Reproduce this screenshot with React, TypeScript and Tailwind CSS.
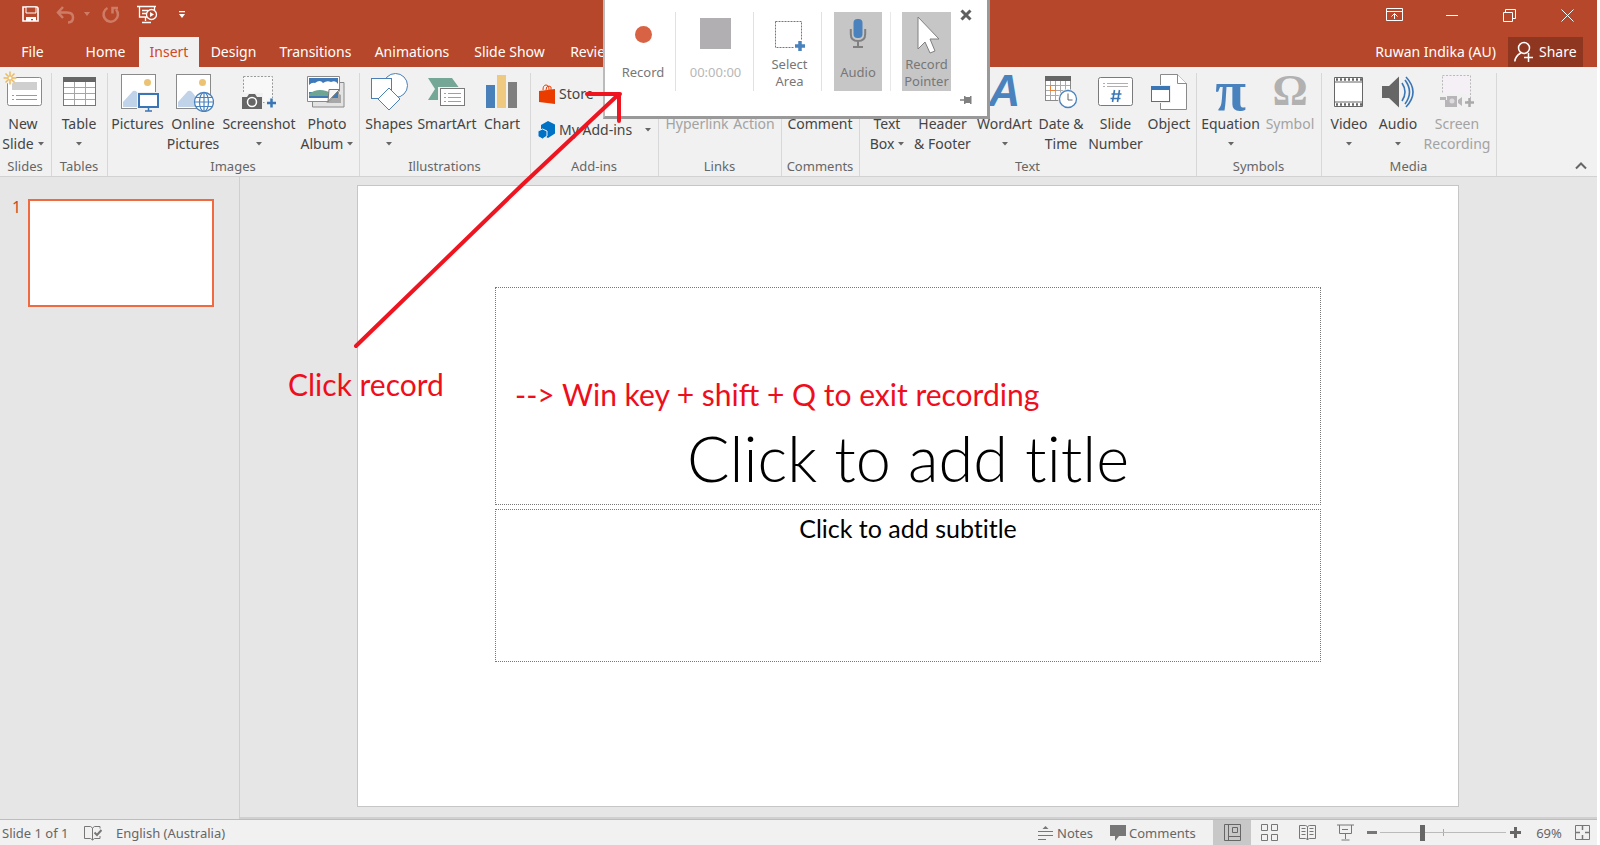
import type { ReactNode } from "react";
import clsx from "clsx";

const Caret = () => (
  <svg width="6" height="4" viewBox="0 0 6 4" className="inline-block shrink-0">
    <path d="M0 0h6L3 3.5z" fill="#666" />
  </svg>
);

const Icon = ({ children }: { children?: ReactNode }) => (
  <svg width="42" height="42" viewBox="0 0 42 42" fill="none" className="shrink-0">
    {children}
  </svg>
);

/* ---------- ribbon icons ---------- */

const NewSlideIcon = () => (
  <Icon>
    <rect x="5.5" y="7.5" width="34" height="28" rx="2" fill="#fff" stroke="#8a8a8a" />
    <rect x="10" y="12" width="25" height="8" fill="#cfcfcf" />
    <path d="M10 25.5h2M14 25.5h21M10 29.5h2M14 29.5h21" stroke="#9a9a9a" />
    <circle cx="8" cy="8" r="6" fill="#f1f1f1" />
    <path d="M8 1.500v13M1.500 8h13M3.500 3.500l9 9M12.500 3.500l-9 9" stroke="#ecbb62" strokeWidth="1.500" />
    <circle cx="8" cy="8" r="2" fill="#fff" stroke="#ecbb62" />
  </Icon>
);

const TableIcon = () => (
  <Icon>
    <rect x="5.500" y="7.500" width="32" height="28" fill="#fff" stroke="#777" />
    <rect x="5" y="7" width="33" height="5" fill="#666" />
    <path d="M16.500 12v23M27.500 12v23M6 17.500h31M6 23.500h31M6 29.500h31" stroke="#a5a5a5" />
  </Icon>
);

const PictureBase = () => (
  <>
    <rect x="4.500" y="4.500" width="34" height="34" fill="#fff" stroke="#8a8a8a" />
    <circle cx="30.500" cy="12.500" r="3.500" fill="#ecc375" />
    <path d="M6 37V32L16 21q2-1 4 1l4 5v10z" fill="#c0d3e8" />
  </>
);

const PicturesIcon = () => (
  <Icon>
    <PictureBase />
    <rect x="20" y="22" width="22" height="20" fill="#f1f1f1" />
    <rect x="22" y="24" width="19" height="13" fill="#fff" stroke="#3a76b5" strokeWidth="2" />
    <path d="M31.500 37v4M28 41h7" stroke="#3a76b5" strokeWidth="1.500" />
  </Icon>
);

const OnlinePicturesIcon = () => (
  <Icon>
    <PictureBase />
    <circle cx="32" cy="32" r="9.500" fill="#fff" stroke="#4a82bd" strokeWidth="1.300" />
    <ellipse cx="32" cy="32" rx="4.500" ry="9.500" stroke="#4a82bd" strokeWidth="1.200" />
    <path d="M32 22.500v19M22.500 32h19M24 27.500h16M24 36.500h16" stroke="#4a82bd" strokeWidth="1.200" />
  </Icon>
);

const ScreenshotIcon = () => (
  <Icon>
    <rect x="5.500" y="6.500" width="29" height="26" fill="#f8f8f8" stroke="#999" strokeDasharray="2 1.500" />
    <rect x="3" y="23" width="22" height="17" fill="#f1f1f1" />
    <path d="M4 27h5l2-3h6l2 3h5v12H4z" fill="#666" />
    <circle cx="14" cy="32" r="4.500" fill="#666" stroke="#fff" strokeWidth="1.500" />
    <path d="M28 33h10M33 28v10" stroke="#f1f1f1" strokeWidth="5" />
    <path d="M29 33h9M33.500 28.500v9" stroke="#3a76b5" strokeWidth="2.500" />
  </Icon>
);

const PhotoAlbumIcon = () => (
  <Icon>
    <path d="M6.500 37v-7h26V12.500h5.500V37z" fill="#e3e3e3" stroke="#8a8a8a" />
    <path d="M20 33h15v-8l-4-2z" fill="#a8a8a8" />
    <path d="M1.500 6.500h32V21L23 31.500H1.500z" fill="#fff" stroke="#8a8a8a" />
    <rect x="3" y="8" width="29" height="20" fill="#3f79b7" />
    <path d="M3 15q3-3 6-2 5-4 8 0 4-3 8-1 5-2 7 2v8H3z" fill="#fff" />
    <path d="M3 24q10-8 24 0v2H3z" fill="#6da592" />
    <path d="M22 31.500l1-12h10.500z" fill="#f5f5f5" stroke="#777" />
  </Icon>
);

const ShapesIcon = () => (
  <Icon>
    <circle cx="27.500" cy="15.500" r="12" fill="#fff" stroke="#4a7fb8" />
    <rect x="3.500" y="8.500" width="20" height="20" fill="#fff" stroke="#4a7fb8" />
    <path d="M21 18l11 11-11 11-11-11z" fill="#fff" stroke="#4a7fb8" />
  </Icon>
);

const SmartArtIcon = () => (
  <Icon>
    <path d="M2 8h24l8 11-8 11H2l7-11z" fill="#74a796" />
    <rect x="12" y="17" width="29" height="21" fill="#f1f1f1" />
    <rect x="14.500" y="18.500" width="24" height="17" fill="#fff" stroke="#7a7a7a" />
    <path d="M18 23.500h2M22 23.500h13M18 27.500h2M22 27.500h13M18 31.500h2M22 31.500h13" stroke="#a0a0a0" />
  </Icon>
);

const ChartIcon = () => (
  <Icon>
    <rect x="5" y="15" width="9" height="23" fill="#4a80b9" />
    <rect x="16" y="5" width="9" height="33" fill="#efc97f" />
    <rect x="27" y="12" width="9" height="26" fill="#7f7f7f" />
  </Icon>
);

const GlyphIcon = ({ glyph, className }: { glyph: string; className: string }) => (
  <span className={clsx("flex h-[42px] items-center justify-center leading-none font-bold", className)}>{glyph}</span>
);

const DateTimeIcon = () => (
  <Icon>
    <rect x="5.500" y="7.500" width="25" height="23" fill="#fff" stroke="#8a8a8a" />
    <path d="M10.500 11v19M15.500 11v19M20.500 11v19M25.500 11v19M6 15.500h24M6 20.500h24M6 25.500h24" stroke="#aaa" />
    <rect x="5" y="6" width="26" height="5" fill="#666" />
    <rect x="10.500" y="15.500" width="5" height="5" fill="#fff" stroke="#e8833a" />
    <circle cx="28" cy="29" r="10" fill="#f1f1f1" />
    <circle cx="28" cy="29" r="8.500" fill="#fff" stroke="#4a82bd" strokeWidth="1.300" />
    <path d="M28 23.500V30h4.500" stroke="#666" />
  </Icon>
);

const SlideNumberIcon = () => (
  <Icon>
    <rect x="3.500" y="7.500" width="34" height="28" rx="2" fill="#fff" stroke="#7a7a7a" />
    <path d="M8 13.500h2M12 13.500h21M8 16.500h2M12 16.500h21" stroke="#b0b0b0" />
    <path d="M19.500 20l-2 12M24.500 20l-2 12M16.500 24h10M15.500 28.500h10" stroke="#3a76b5" strokeWidth="1.600" />
  </Icon>
);

const ObjectIcon = () => (
  <Icon>
    <path d="M12.500 4.500h17l9 9v26h-26z" fill="#fff" stroke="#8a8a8a" />
    <path d="M29.500 4.500v9h9" fill="#fff" stroke="#8a8a8a" />
    <rect x="2" y="15" width="21" height="18" fill="#f1f1f1" />
    <rect x="3.500" y="16.500" width="18" height="15" fill="#fff" stroke="#3a76b5" />
    <rect x="3" y="16" width="19" height="4" fill="#3a76b5" />
  </Icon>
);

const VideoIcon = () => (
  <Icon>
    <path d="M6.500 7.500h28v29h-28z" fill="#fff" stroke="#666" />
    <path d="M8 9.500h26M8 34.500h26" stroke="#666" strokeWidth="2.500" strokeDasharray="2 2" />
    <path d="M7 12h27M7 32h27" stroke="#666" />
  </Icon>
);

const AudioIcon = () => (
  <Icon>
    <path d="M5 16h7L22 6.500v31L12 28H5z" fill="#666" />
    <path d="M25 13q6 9 0 18M28 10q9 12 0 24M29 7q14 15 0 30" stroke="#3a76b5" strokeWidth="1.600" />
  </Icon>
);

const ScreenRecordingIcon = () => (
  <Icon>
    <rect x="6.500" y="5.500" width="28" height="26" fill="#f5f0f5" stroke="#bbb" strokeDasharray="2 1.500" />
    <rect x="3" y="24" width="28" height="14" fill="#f1f1f1" />
    <path d="M4 27h6v3H4zM11 26h10v11H9v-7h2zM22 30l4-3v9l-4-3z" fill="#b8b5b8" />
    <circle cx="16" cy="31" r="2.500" fill="#dedbde" />
    <path d="M29 32.500h9M33.500 28v9" stroke="#aaa" strokeWidth="2.500" />
  </Icon>
);

const StoreIcon = () => (
  <svg width="18" height="20" viewBox="0 0 18 20" fill="none">
    <path d="M5 6q0-5 3-5t3 5M8 6q0-4 3-4t2 4" stroke="#eb3c00" />
    <path d="M1 7l16-2v15L1 18z" fill="#eb3c00" />
  </svg>
);

const AddInsIcon = () => (
  <svg width="18" height="18" viewBox="0 0 18 18">
    <path d="M10 0l7 3.500v9L10 17l-7-4V4z" fill="#0072c6" />
    <path d="M4.500 8l4.500 2v5l-4.500 3L0 15.500V10z" fill="#0072c6" stroke="#f1f1f1" />
  </svg>
);

/* ---------- ribbon building blocks ---------- */

interface ToolProps {
  icon?: ReactNode;
  lines: string[];
  width: string;
  menu?: boolean;
  disabled?: boolean;
}

const Tool = ({ icon, lines, width, menu, disabled }: ToolProps) => (
  <button
    disabled={disabled}
    className={clsx(
      "flex shrink-0 flex-col items-center whitespace-nowrap text-sm leading-5",
      width,
      disabled ? "text-[#a3a3a3]" : "text-[#444]"
    )}
  >
    <span className="flex h-11 items-start justify-center">{icon}</span>
    <span>{lines[0]}</span>
    <span className="flex h-5 items-center gap-1">
      {lines[1]}
      {menu && <Caret />}
    </span>
  </button>
);

const Group = ({ label, width, children }: { label: string; width: string; children: ReactNode }) => (
  <section
    aria-label={label}
    className={clsx(
      "relative flex shrink-0 flex-col after:absolute after:top-[3px] after:right-0 after:h-[103px] after:w-px after:bg-[#d8d8d8]",
      width
    )}
  >
    <div className="flex h-[87px]">{children}</div>
    <div className="pr-0.5 text-center text-[13px] leading-5 text-[#666]">{label}</div>
  </section>
);

const Ribbon = () => (
  <div className="flex h-[110px] shrink-0 border-b border-[#d2d2d2] bg-[#f1f1f1] pt-[3px]">
    <Group label="Slides" width="w-[52px]">
      <Tool icon={<NewSlideIcon />} lines={["New", "Slide"]} width="w-[46px]" menu />
    </Group>
    <Group label="Tables" width="w-14">
      <Tool icon={<TableIcon />} lines={["Table"]} width="w-[54px]" menu />
    </Group>
    <Group label="Images" width="w-[252px]">
      <Tool icon={<PicturesIcon />} lines={["Pictures"]} width="w-[59px]" />
      <Tool icon={<OnlinePicturesIcon />} lines={["Online", "Pictures"]} width="w-[52px]" />
      <Tool icon={<ScreenshotIcon />} lines={["Screenshot"]} width="w-20" menu />
      <Tool icon={<PhotoAlbumIcon />} lines={["Photo", "Album"]} width="w-14" menu />
    </Group>
    <Group label="Illustrations" width="w-[171px]">
      <Tool icon={<ShapesIcon />} lines={["Shapes"]} width="w-[58px]" menu />
      <Tool icon={<SmartArtIcon />} lines={["SmartArt"]} width="w-[58px]" />
      <Tool icon={<ChartIcon />} lines={["Chart"]} width="w-[52px]" />
    </Group>
    <Group label="Add-ins" width="w-[128px]">
      <div className="flex flex-col gap-4 pt-[14px] pl-[7px] text-sm leading-5 text-[#444]">
        <button className="flex items-center gap-[3px]">
          <StoreIcon />
          Store
        </button>
        <button className="flex items-center gap-[3px] whitespace-nowrap">
          <AddInsIcon />
          My Add-ins
          <span className="flex pl-2.5">
            <Caret />
          </span>
        </button>
      </div>
    </Group>
    <Group label="Links" width="w-[123px]">
      <div className="flex pl-2">
        <Tool lines={["Hyperlink"]} width="w-[60px]" disabled />
        <Tool lines={["Action"]} width="w-[54px]" disabled />
      </div>
    </Group>
    <Group label="Comments" width="w-[78px]">
      <Tool lines={["Comment"]} width="w-[76px]" />
    </Group>
    <Group label="Text" width="w-[337px]">
      <Tool lines={["Text", "Box"]} width="w-[54px]" menu />
      <Tool lines={["Header", "& Footer"]} width="w-[57px]" />
      <Tool
        icon={<GlyphIcon glyph="A" className="font-['Liberation_Sans'] text-[44px] text-[#4a82bd] italic" />}
        lines={["WordArt"]}
        width="w-[67px]"
        menu
      />
      <Tool icon={<DateTimeIcon />} lines={["Date &", "Time"]} width="w-[46px]" />
      <Tool icon={<SlideNumberIcon />} lines={["Slide", "Number"]} width="w-[63px]" />
      <Tool icon={<ObjectIcon />} lines={["Object"]} width="w-[44px]" />
    </Group>
    <Group label="Symbols" width="w-[125px]">
      <Tool
        icon={<GlyphIcon glyph="π" className="font-['Liberation_Serif'] text-[56px] text-[#4a82bd]" />}
        lines={["Equation"]}
        width="w-[67px]"
        menu
      />
      <Tool
        icon={<GlyphIcon glyph="Ω" className="font-['Liberation_Serif'] text-[44px] text-[#b1b1b1]" />}
        lines={["Symbol"]}
        width="w-[52px]"
        disabled
      />
    </Group>
    <Group label="Media" width="w-[175px]">
      <Tool icon={<VideoIcon />} lines={["Video"]} width="w-[54px]" menu />
      <Tool icon={<AudioIcon />} lines={["Audio"]} width="w-[44px]" menu />
      <Tool icon={<ScreenRecordingIcon />} lines={["Screen", "Recording"]} width="w-[74px]" disabled />
    </Group>
    <button aria-label="Collapse ribbon" className="mt-auto mr-2.5 mb-1 ml-auto">
      <svg width="12" height="12" viewBox="0 0 12 12" fill="none">
        <path d="M1 8.500l5-5 5 5" stroke="#666" strokeWidth="2" />
      </svg>
    </button>
  </div>
);

/* ---------- title bar and tabs ---------- */

const TitleBar = () => (
  <div className="flex h-[37px] items-start pt-1 text-white">
    <button aria-label="Save" className="ml-[21px]">
      <svg width="20" height="20" viewBox="0 0 20 20" fill="none">
        <path d="M2 3h14l1 1v13H2z" stroke="#fff" strokeWidth="1.600" />
        <path d="M5 3h10v6H5z" fill="#b7472a" stroke="#fff" />
        <path d="M5 17v-4h10v4h-3v-2h-2v2z" fill="#fff" />
      </svg>
    </button>
    <button aria-label="Undo" className="ml-[15px]" disabled>
      <svg width="20" height="22" viewBox="0 0 20 22" fill="none">
        <path d="M7 3L2 8.500 7 14M2 8.500h9q6 0 6 5t-5 5" stroke="#cf7c67" strokeWidth="2.500" />
      </svg>
    </button>
    <button aria-label="Undo list" className="mt-2 ml-2" disabled>
      <svg width="6" height="5" viewBox="0 0 6 5">
        <path d="M0 0h6L3 4z" fill="#cf7c67" />
      </svg>
    </button>
    <button aria-label="Repeat" className="ml-[11px]" disabled>
      <svg width="20" height="22" viewBox="0 0 20 22" fill="none">
        <path d="M6.500 4A7.200 7.200 0 1 0 15 5.500M11.500 9.500V4H17" stroke="#cf7c67" strokeWidth="2.500" />
      </svg>
    </button>
    <button aria-label="Start from beginning" className="ml-[15px]">
      <svg width="22" height="20" viewBox="0 0 22 20" fill="none" stroke="#fff">
        <path d="M1 2.500h19M3.500 3v10h8M18.500 3v3M6 6.500h6M6 9.500h4M9.500 13v4M6 18.500h9" strokeWidth="1.300" />
        <circle cx="15.500" cy="10.500" r="5" fill="#b7472a" strokeWidth="1.300" />
        <path d="M14 8l4 2.500L14 13z" fill="#fff" stroke="none" />
      </svg>
    </button>
    <button aria-label="Customize toolbar" className="mt-[7px] ml-5">
      <svg width="8" height="8" viewBox="0 0 8 8">
        <path d="M1 0h6v1.300H1zM1 3h6L4 7z" fill="#fff" />
      </svg>
    </button>
    <div className="mr-px ml-auto flex">
      <button aria-label="Ribbon display options" className="flex h-[22px] w-[57px] items-center justify-center">
        <svg width="17" height="14" viewBox="0 0 17 14" fill="none" stroke="#fff">
          <path d="M.5.500h16v12H.500zM.5 3.500h16M8.500 11V5.500M5.500 8.500l3-3 3 3" />
        </svg>
      </button>
      <button aria-label="Minimize" className="flex h-[22px] w-[58px] items-center justify-center">
        <span className="h-px w-3 bg-white" />
      </button>
      <button aria-label="Restore" className="flex h-[22px] w-[57px] items-center justify-center">
        <svg width="13" height="13" viewBox="0 0 13 13" fill="none" stroke="#fff">
          <path d="M.5 3.500h9v9h-9zM2.500 3V.500h10v9H10" />
        </svg>
      </button>
      <button aria-label="Close" className="flex h-[22px] w-[58px] items-center justify-center">
        <svg width="13" height="13" viewBox="0 0 13 13" fill="none" stroke="#fff">
          <path d="M.5.500l12 12M12.500.500l-12 12" />
        </svg>
      </button>
    </div>
  </div>
);

const tabs = [
  { name: "File", width: "w-[65px]" },
  { name: "Home", width: "w-[67px] ml-[7px]" },
  { name: "Insert", width: "w-[60px]" },
  { name: "Design", width: "w-[69px]" },
  { name: "Transitions", width: "w-[95px]" },
  { name: "Animations", width: "w-[98px]" },
  { name: "Slide Show", width: "w-[97px]" },
  { name: "Review", width: "w-[70px]" },
];

const TabRow = () => (
  <div className="flex h-[30px] text-sm leading-5 text-white">
    {tabs.map((tab) => (
      <button
        key={tab.name}
        className={clsx(
          "flex shrink-0 items-center justify-center whitespace-nowrap",
          tab.width,
          tab.name === "Insert" && "bg-[#f1f1f1] text-[#d24726]"
        )}
      >
        {tab.name}
      </button>
    ))}
    <button className="ml-auto px-3">Ruwan Indika (AU)</button>
    <button className="mr-[14px] flex w-[75px] items-center gap-1.5 bg-[#8f3621] pl-1.5">
      <svg width="19" height="22" viewBox="0 0 19 22" fill="none" stroke="#fff" strokeWidth="1.500">
        <circle cx="10" cy="7" r="5.500" />
        <path d="M.8 20.500q.5-5.500 6-8.500M14.500 12v9M10 16.500h9" />
      </svg>
      Share
    </button>
  </div>
);

/* ---------- screen recorder ---------- */

const recorderText = "text-[13px] leading-[17px]";

const RecorderDock = () => (
  <div className="absolute top-0 left-[603px] flex h-[119px] w-[387px] border-r-[3px] border-b-[3px] border-l-2 border-[#999] border-l-[#bbb] bg-white pt-3 text-[#777]">
    <button className={clsx("flex h-[79px] w-[71px] flex-col items-center border-r border-[#e1e1e1] pl-1.5", recorderText)}>
      <span className="mt-3.5 mb-[21px] h-[17px] w-[17px] rounded-full bg-[#d86344]" />
      Record
    </button>
    <button
      disabled
      className={clsx("flex h-[79px] w-[78px] flex-col items-center border-r border-[#e1e1e1] pl-0.5 text-[#b8b8b8]", recorderText)}
    >
      <span className="mt-1.5 mb-[15px] h-[31px] w-[31px] bg-[#b1afb1]" />
      00:00:00
    </button>
    <button className={clsx("flex h-[79px] w-[68px] flex-col items-center border-r border-[#e1e1e1] pl-1", recorderText)}>
      <svg width="32" height="34" viewBox="0 0 32 34" fill="none" className="mt-2 mb-0.5">
        <rect x="1.500" y="1.500" width="26" height="26" stroke="#777" strokeDasharray="2 1" />
        <path d="M20 26h12M26 20v12" stroke="#fff" strokeWidth="6" />
        <path d="M21 26h10M26 21v10" stroke="#4a82bd" strokeWidth="3.500" />
      </svg>
      Select
      <br />
      Area
    </button>
    <button className={clsx("ml-3 flex h-[79px] w-12 flex-col items-center bg-[#c6c6c6]", recorderText)}>
      <svg width="18" height="32" viewBox="0 0 18 32" fill="none" className="mt-1.5 mb-[14px]">
        <rect x="4.500" y="1" width="9" height="19" rx="4" fill="#4a82bd" />
        <path d="M1.800 11v5q0 7 7.200 7t7.200-7v-5M9 23v6M4 29h10" stroke="#808080" strokeWidth="2" />
      </svg>
      Audio
    </button>
    <div className="ml-2 h-[79px] w-px bg-[#e8e8e8]" />
    <button className={clsx("ml-[11px] flex h-[79px] w-[49px] flex-col items-center bg-[#c6c6c6]", recorderText)}>
      <svg width="24" height="38" viewBox="0 0 24 38" className="mt-1 mb-0.5 ml-1">
        <path d="M1 1v32l7-7 5 11 5-2-5-12h9z" fill="#fff" stroke="#808080" />
      </svg>
      Record
      <br />
      Pointer
    </button>
    <div className="flex h-[93px] flex-1 flex-col items-center justify-between pr-[6px]">
      <button aria-label="Close recorder" className="-mt-1">
        <svg width="12" height="14" viewBox="0 0 12 14">
          <path d="M1.500 2.500l9 9M10.500 2.500l-9 9" stroke="#606060" strokeWidth="3" />
        </svg>
      </button>
      <button aria-label="Pin recorder">
        <svg width="12" height="10" viewBox="0 0 12 10" fill="#808080">
          <path d="M0 4.300h4V1h1.500v1H10V1h1.500v8H10V8H5.500v1H4V5.700H0z" />
        </svg>
      </button>
    </div>
  </div>
);

/* ---------- work area ---------- */

const Workspace = () => (
  <main className="flex flex-1 bg-[#e6e6e6]">
    <aside className="flex w-[240px] shrink-0 items-start border-r border-[#cfcfcf] pt-[22px] pl-3">
      <span className="w-4 text-base leading-4 text-[#d24726]">1</span>
      <button aria-label="Slide 1" className="h-[108px] w-[186px] border-2 border-[#f0693f] bg-white" />
    </aside>
    <div className="flex flex-1 border-b-2 border-[#d0d0d0] pt-2 pr-[138px] pb-2.5 pl-[117px]">
      <div className="flex flex-1 flex-col gap-1 border border-[#c6c6c6] bg-white px-[12.4%] pt-[101px] font-[Lato] text-black [font-variant-ligatures:none]">
        <div className="flex h-[218px] items-end justify-center border border-dotted border-[#777] pb-2">
          <h1 className="text-[63px] leading-[76px] font-light whitespace-nowrap">Click to add title</h1>
        </div>
        <div className="h-[153px] border border-dotted border-[#777] pt-0.5">
          <p className="text-center text-[25px] leading-8">Click to add subtitle</p>
        </div>
      </div>
    </div>
  </main>
);

const Annotations = () => (
  <div className="pointer-events-none absolute inset-0 font-[Lato] text-[#ee0e1c]">
    <svg width="640" height="360" viewBox="0 0 640 360" fill="none" className="absolute top-0 left-0">
      <path
        d="M356 346L522 185 619 94M587 94H620M619 95V121"
        stroke="#ee1520"
        strokeWidth="4"
        strokeLinecap="round"
        strokeLinejoin="round"
      />
    </svg>
    <p className="absolute top-[364px] left-[288px] text-[30px] leading-10 whitespace-nowrap">Click record</p>
    <p className="absolute top-[374px] left-[515px] text-[30px] leading-10 whitespace-nowrap">
      {"--> Win key + shift + Q to exit recording"}
    </p>
  </div>
);

/* ---------- status bar ---------- */

const StatusBar = () => (
  <footer className="flex h-[26px] shrink-0 items-center border-t border-[#bdbdbd] bg-[#f1f1f1] pl-0.5 text-[13px] leading-5 text-[#666]">
    <span className="w-[82px] whitespace-nowrap">Slide 1 of 1</span>
    <button aria-label="Spelling" className="w-[32px]">
      <svg width="18" height="16" viewBox="0 0 18 16" fill="none" stroke="#777">
        <path d="M.5 1.500h6l2 1.500v12l-2-1.500h-6zM8.500 3l2-1.500h5.500v2M16 11v2.500h-5.500L8.500 15" />
        <path d="M10.500 7.500l2.500 2.500 4.500-5" strokeWidth="2" />
      </svg>
    </button>
    <button className="whitespace-nowrap">English (Australia)</button>
    <div className="ml-auto flex h-full items-center">
      <button className="flex w-[72px] items-center gap-1">
        <svg width="15" height="15" viewBox="0 0 15 15" fill="none" stroke="#777">
          <path d="M4.500 4L7.500 1l3 3z" fill="#777" stroke="none" />
          <path d="M0 6.500h15M0 10.500h15M0 14.500h8" />
        </svg>
        Notes
      </button>
      <button className="flex w-[103px] items-center gap-[3px]">
        <svg width="16" height="17" viewBox="0 0 16 17">
          <path d="M0 1h16v11H9l-4 5v-5H0z" fill="#777" />
        </svg>
        Comments
      </button>
      <button aria-label="Normal view" className="flex h-full w-[38px] items-center justify-center bg-[#c8c8c8]">
        <svg width="17" height="17" viewBox="0 0 17 17" fill="none" stroke="#666">
          <path d="M.5.500h16v16H.500zM4.500.500v16M4.500 12.500h12M8.500 3.500h5v5h-5z" />
        </svg>
      </button>
      <button aria-label="Slide sorter" className="flex w-[37px] justify-center">
        <svg width="17" height="17" viewBox="0 0 17 17" fill="none" stroke="#777">
          <path d="M.5.500h6v6h-6zM10.500.500h6v6h-6zM.5 10.500h6v6h-6zM10.500 10.500h6v6h-6z" />
        </svg>
      </button>
      <button aria-label="Reading view" className="flex w-[38px] justify-center">
        <svg width="17" height="17" viewBox="0 0 17 17" fill="none" stroke="#777">
          <path d="M.5 1.500h6l2 1 2-1h6v13h-6l-2 1-2-1h-6zM8.500 3v13M2.500 4.500h4M2.500 7.500h4M2.500 10.500h4M10.500 4.500h4M10.500 7.500h4M10.500 10.500h4" />
        </svg>
      </button>
      <button aria-label="Slide show" className="flex w-[38px] justify-center">
        <svg width="17" height="17" viewBox="0 0 17 17" fill="none" stroke="#777">
          <path d="M0 1h17M2.500 1v8.500h12V1M5 5.500h6M8.500 10v5M4.500 16h8" />
        </svg>
      </button>
      <button aria-label="Zoom out" className="flex w-4 justify-center">
        <span className="h-[3px] w-2.5 bg-[#777]" />
      </button>
      <div className="relative flex w-[126px] items-center">
        <span className="absolute left-[63px] h-[7px] w-px bg-[#aaa]" />
        <input
          type="range"
          aria-label="Zoom"
          defaultValue={33}
          className="relative h-4 w-full appearance-none bg-[linear-gradient(#bbb,#bbb)] bg-[length:100%_1px] bg-center bg-no-repeat [&::-webkit-slider-thumb]:h-4 [&::-webkit-slider-thumb]:w-[5px] [&::-webkit-slider-thumb]:appearance-none [&::-webkit-slider-thumb]:bg-[#666]"
        />
      </div>
      <button aria-label="Zoom in" className="flex w-[19px] justify-center">
        <svg width="11" height="11" viewBox="0 0 11 11">
          <path d="M0 5.500h11M5.500 0v11" stroke="#666" strokeWidth="3" />
        </svg>
      </button>
      <button className="w-12">69%</button>
      <button aria-label="Fit slide to window" className="mr-1.5 ml-0.5">
        <svg width="16" height="16" viewBox="0 0 16 16" fill="none" stroke="#777">
          <path d="M.5.500h14v14H.500z" />
          <path d="M7.500 0v5M7.500 10v5M0 7.500h5M10 7.500h5" strokeWidth="1.500" />
        </svg>
      </button>
    </div>
  </footer>
);

const App = () => {
  return (
    <div className="relative flex min-h-screen flex-col overflow-hidden bg-white pr-[3px] font-['Noto_Sans',sans-serif]">
      <header className="shrink-0 bg-[#b7472a]">
        <TitleBar />
        <TabRow />
      </header>
      <Ribbon />
      <Workspace />
      <StatusBar />
      <RecorderDock />
      <Annotations />
    </div>
  );
};

export default App;
